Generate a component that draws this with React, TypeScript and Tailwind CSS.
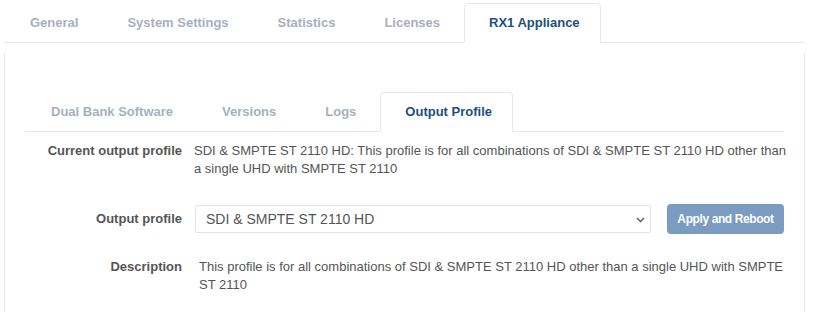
import React from "react";

const TOP_TABS = ["General", "System Settings", "Statistics", "Licenses", "RX1 Appliance"];
const SUB_TABS = ["Dual Bank Software", "Versions", "Logs", "Output Profile"];

function TabBar({ tabs, active }: { tabs: string[]; active: string }) {
  return (
    <ul className="flex border-b border-[#e6e8ec]">
      {tabs.map((tab, index) => {
        const isActive = tab === active;
        return (
          <li key={tab} className={`-mb-px ${index === 0 ? "ml-[1.5px]" : ""}`}>
            <a
              className={`block rounded-t-[4px] border py-[11px] text-[13px] font-bold leading-[16px] ${
                isActive
                  ? "-ml-[1px] border-[#e6e8ec] border-b-white bg-white pl-[24.5px] pr-[20px] text-[#1d4f7c]"
                  : "border-transparent px-[23.5px] text-[#a7b0c0]"
              }`}
            >
              {tab}
            </a>
          </li>
        );
      })}
    </ul>
  );
}

export default function App() {
  return (
    <div
      className="h-[312px] w-[813px] overflow-hidden bg-white"
      style={{ fontFamily: '"Liberation Sans", Arial, sans-serif' }}
    >
      <div className="ml-[4px] w-[801px] pt-[3px]">
        <TabBar tabs={TOP_TABS} active="RX1 Appliance" />

        <section className="mt-[10px] h-[400px] border-x border-[#e6e8ec] px-[20px] pt-[39px]">
          <TabBar tabs={SUB_TABS} active="Output Profile" />

          <div className="mt-[10px] text-[13px] leading-[18px] text-[#555]">
            <div className="grid grid-cols-[157px_598px] gap-x-[12px]">
              <div className="text-right font-bold">Current output profile</div>
              <div>
                SDI &amp; SMPTE ST 2110 HD: This profile is for all combinations of SDI &amp; SMPTE ST 2110 HD
                other than a single UHD with SMPTE ST 2110
              </div>
            </div>

            <div className="mt-[26px] grid grid-cols-[157px_598px] items-center gap-x-[12px]">
              <div className="text-right font-bold">Output profile</div>
              <div className="flex items-center gap-[16px]">
                <div className="relative ml-[1px] w-[456px]">
                  <select className="h-[28px] w-full appearance-none rounded-[2px] border border-[#e3e3e3] bg-white pl-[10px] text-[14px] text-[#555] outline-none">
                    <option>SDI &amp; SMPTE ST 2110 HD</option>
                    <option>UHD &amp; SMPTE ST 2110</option>
                  </select>
                  <svg
                    className="pointer-events-none absolute right-[6px] top-[12px]"
                    width="9"
                    height="6"
                    viewBox="0 0 9 6"
                    fill="none"
                  >
                    <path d="M1 1l3.5 3.5L8 1" stroke="#6b6b6b" strokeWidth="1.6" />
                  </svg>
                </div>
                <button
                  type="button"
                  className="h-[30px] w-[117px] rounded-[4px] bg-[#7b9cc0] text-[12px] font-bold tracking-[-0.4px] text-white"
                >
                  Apply and Reboot
                </button>
              </div>
            </div>

            <div className="mt-[24px] grid grid-cols-[157px_598px] gap-x-[12px]">
              <div className="text-right font-bold">Description</div>
              <div className="pl-[5px]">
                This profile is for all combinations of SDI &amp; SMPTE ST 2110 HD other than a single UHD with SMPTE
                ST 2110
              </div>
            </div>
          </div>
        </section>
      </div>
    </div>
  );
}
